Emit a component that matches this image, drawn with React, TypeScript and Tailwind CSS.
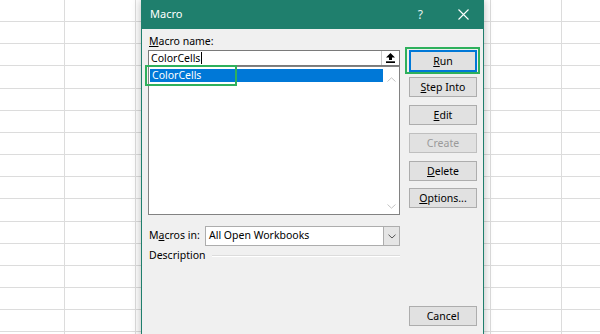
import React from 'react'

const cols = [65, 71, 71, 71, 71, 71, 71, 71, 71]
const rows = Array.from({ length: 16 })

function Sheet() {
  return (
    <div className="flex flex-col">
      {rows.map((_, r) => (
        <div key={r} className="flex h-[22.17px] shrink-0">
          {cols.map((w, c) => (
            <div
              key={c}
              className={
                c === 0
                  ? 'w-[65px] shrink-0 border-r border-b border-[#dcdcdc]'
                  : 'w-[71px] shrink-0 border-r border-b border-[#dcdcdc]'
              }
            />
          ))}
        </div>
      ))}
    </div>
  )
}

function Btn({ children, disabled }: { children: React.ReactNode; disabled?: boolean }) {
  return (
    <button
      className={
        disabled
          ? 'h-[20px] w-full border border-[#bfbfbf] bg-[#e1e1e1] text-[#9a9a9a] leading-none'
          : 'h-[20px] w-full border border-[#adadad] bg-[#e1e1e1] text-black leading-none'
      }
    >
      {children}
    </button>
  )
}

export default function App() {
  return (
    <div className="relative w-[600px] h-[334px] overflow-hidden bg-white font-['Noto_Sans',sans-serif] text-[10.5px]">
      <Sheet />

      {/* Macro dialog */}
      <div className="absolute left-[141px] top-0 w-[343px] h-[360px] border-x border-[#1f7f6d] bg-[#f0f0f0] shadow-[0_0_9px_rgba(0,0,0,0.28)] flex flex-col">
        <div className="h-[29px] shrink-0 bg-[#1f7f6d] flex items-center pl-[8px] text-white">
          <span className="text-[11px]">Macro</span>
          <span className="ml-auto text-[12px] mr-[35px] text-[#e6f2ef]">?</span>
          <svg width="11" height="11" viewBox="0 0 11 11" className="mr-[14px]">
            <path d="M0.5 0.5 L10.5 10.5 M10.5 0.5 L0.5 10.5" stroke="#fff" strokeWidth="1.1" />
          </svg>
        </div>

        <div className="flex pl-[6px] pr-[6px]">
          {/* left column */}
          <div className="w-[252px] flex flex-col">
            <div className="h-[14px] mt-[5px] leading-[14px] pl-[1px]">
              <u className="underline-offset-1">M</u>acro name:
            </div>
            <div className="mt-[2px] h-[16px] bg-white border border-[#7a7a7a] flex items-center">
              <span className="pl-[2px] text-black leading-none">ColorCells</span>
              <span className="w-px h-[12px] bg-black ml-[1px]" />
              <div className="ml-auto h-full w-[18px] border-l border-[#c8c8c8] bg-white flex items-center justify-center">
                <svg width="9" height="10" viewBox="0 0 9 10">
                  <polygon points="4.5,0 9,4.5 6,4.5 6,7 3,7 3,4.5 0,4.5" fill="#000" />
                  <rect x="0" y="8.3" width="9" height="1.7" fill="#000" />
                </svg>
              </div>
            </div>
            <div className="h-[149px] bg-white border border-[#828282] flex">
              <div className="flex-1 pt-[2px] pl-[1px]">
                <div className="h-[13px] bg-[#0078d7] text-white leading-[13px] pl-[2px]">ColorCells</div>
              </div>
              <div className="w-[16px] flex flex-col items-center justify-between pt-[10px] pb-[5px]">
                <svg width="9" height="5" viewBox="0 0 9 5">
                  <path d="M0.5 4.5 L4.5 0.8 L8.5 4.5" stroke="#c4c4c4" fill="none" strokeWidth="1" />
                </svg>
                <svg width="9" height="5" viewBox="0 0 9 5">
                  <path d="M0.5 0.5 L4.5 4.2 L8.5 0.5" stroke="#c4c4c4" fill="none" strokeWidth="1" />
                </svg>
              </div>
            </div>

            <div className="mt-[11px] h-[20px] flex items-center">
              <span className="w-[57px] pl-[1px]">
                M<u className="underline-offset-1">a</u>cros in:
              </span>
              <div className="flex-1 h-full bg-white border border-[#adadad] flex items-center">
                <span className="pl-[3px]">All Open Workbooks</span>
                <div className="ml-auto h-full w-[16px] bg-[#e5e5e5] border-l border-[#adadad] flex items-center justify-center">
                  <svg width="8" height="5" viewBox="0 0 8 5">
                    <path d="M0.5 0.7 L4 4 L7.5 0.7" stroke="#555" fill="none" strokeWidth="1" />
                  </svg>
                </div>
              </div>
            </div>

            <div className="mt-[3px] h-[14px] flex items-center">
              <span className="pl-[1px]">Description</span>
              <div className="flex-1 ml-[6px] h-[2px] border-t border-[#dcdcdc] border-b border-b-white" />
            </div>
          </div>

          {/* right column */}
          <div className="ml-[9px] w-[68px] flex flex-col pt-[21px]">
            <button className="h-[22px] w-full border-2 border-[#0078d7] bg-[#e1e1e1] text-black leading-none">
              <u className="underline-offset-1">R</u>un
            </button>
            <div className="mt-[5px]">
              <Btn>
                <u className="underline-offset-1">S</u>tep Into
              </Btn>
            </div>
            <div className="mt-[8px]">
              <Btn>
                <u className="underline-offset-1">E</u>dit
              </Btn>
            </div>
            <div className="mt-[8px]">
              <Btn disabled>Create</Btn>
            </div>
            <div className="mt-[8px]">
              <Btn>
                <u className="underline-offset-1">D</u>elete
              </Btn>
            </div>
            <div className="mt-[7px]">
              <Btn>
                <u className="underline-offset-1">O</u>ptions...
              </Btn>
            </div>
            <div className="mt-[98px]">
              <Btn>Cancel</Btn>
            </div>
          </div>
        </div>
      </div>

      {/* green annotation boxes */}
      <div className="absolute left-[405px] top-[47px] w-[75px] h-[27px] border-2 border-[#2eb05c]" />
      <div className="absolute left-[145px] top-[65px] w-[92px] h-[21px] border-2 border-[#2eb05c]" />
    </div>
  )
}
